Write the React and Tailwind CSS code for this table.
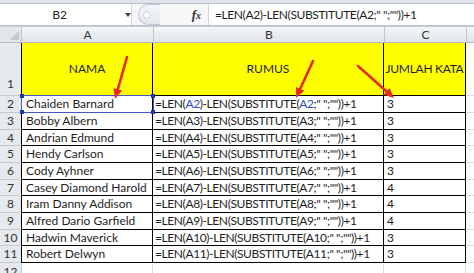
import React from "react";

const data = [
  ["Chaiden Barnard", 2, 3],
  ["Bobby Albern", 3, 3],
  ["Andrian Edmund", 4, 3],
  ["Hendy Carlson", 5, 3],
  ["Cody Ayhner", 6, 3],
  ["Casey Diamond Harold", 7, 4],
  ["Iram Danny Addison", 8, 4],
  ["Alfred Dario Garfield", 9, 4],
  ["Hadwin Maverick", 10, 3],
  ["Robert Delwyn", 11, 3],
];
const heights = ["h-[17px]", "h-[17px]", "h-[16px]", "h-[17px]", "h-[17px]", "h-[16px]", "h-[17px]", "h-[17px]", "h-[16px]", "h-[17px]"];

const font = { fontFamily: "Lato, 'Liberation Sans', sans-serif" };

function Formula({ n, hl }) {
  const cls = hl ? "text-[#3347c4]" : "";
  return (
    <>
      =LEN(<span className={cls}>A{n}</span>)-LEN(SUBSTITUTE(<span className={cls}>A{n}</span>;" ";""))+1
    </>
  );
}

function Arrow({ x1, y1, x2, y2 }) {
  const dx = x2 - x1, dy = y2 - y1;
  const len = Math.hypot(dx, dy);
  const ux = dx / len, uy = dy / len;
  const hl = 10, hw = 4.5;
  const bx = x2 - ux * hl, by = y2 - uy * hl;
  const px = -uy, py = ux;
  const pts = `${x2},${y2} ${bx + px * hw},${by + py * hw} ${bx - px * hw},${by - py * hw}`;
  return (
    <g>
      <line x1={x1} y1={y1} x2={bx + ux * 1} y2={by + uy * 1} stroke="#e52a1e" strokeWidth="2.6" strokeLinecap="round" />
      <polygon points={pts} fill="#e52a1e" />
    </g>
  );
}

export default function App() {
  return (
    <div className="relative w-[474px] h-[273px] overflow-hidden bg-white text-[12px] text-[#1e1e1e]" style={font}>
      {/* formula bar */}
      <div className="h-[27px] bg-[#dfe3e9] pt-[3px] border-b border-[#c9ced6]">
        <div className="flex h-[23px] border-y border-[#b7c0cc] bg-white">
          <div className="w-[131px] flex items-center relative">
            <span className="w-full text-center pr-[16px] pl-[4px] text-[12px] text-[#222]">B2</span>
            <span className="absolute left-[125px] top-[9px] w-0 h-0 border-l-[3px] border-r-[3px] border-t-[4px] border-l-transparent border-r-transparent border-t-[#444]"></span>
          </div>
          <div className="w-[78px] flex items-center bg-[#f6f7f9] border-l border-[#d3d8de] border-r border-[#b8c0ca]">
            <div className="ml-[6px] w-[22px] h-[21px] rounded-l-full border border-r-0 border-[#c3c9d1] bg-gradient-to-b from-[#f4f6f9] to-[#e3e7ec] flex items-center pl-[4px]">
              <div className="w-[8px] h-[8px] rounded-full border border-[#c9cfd6] bg-white"></div>
            </div>
            <span className="ml-auto mr-[7px] italic font-bold text-[13px] text-[#333]" style={{ fontFamily: "'Liberation Serif', serif" }}>
              f<span className="text-[10px]">x</span>
            </span>
          </div>
          <div className="flex-1 flex items-center pl-[6px] text-[12px] tracking-[-0.4px] whitespace-nowrap">
            =LEN(A2)-LEN(SUBSTITUTE(A2;" ";""))+1
          </div>
        </div>
      </div>

      {/* column headers */}
      <div className="flex h-[16px] bg-gradient-to-b from-[#f3f5f8] to-[#e1e5ea] border-b border-[#b5bcc6] text-[12px] text-[#333]">
        <div className="w-[22px] border-r border-[#bfc6cf] relative bg-[#e3e7ec]">
          <svg className="absolute right-[2px] bottom-[2px]" width="9" height="9" viewBox="0 0 9 9"><polygon points="9,0 9,9 0,9" fill="#c3c9d1" /></svg>
        </div>
        <div className="w-[132px] border-r border-[#bfc6cf] flex items-center justify-center">A</div>
        <div className="w-[231px] border-r border-[#bfc6cf] flex items-center justify-center">B</div>
        <div className="w-[82px] border-r border-[#bfc6cf] flex items-center justify-center">C</div>
        <div className="flex-1"></div>
      </div>

      {/* row 1 */}
      <div className="flex h-[53px]">
        <div className="w-[22px] bg-[#e6e9ed] border-r border-b border-[#c4cad2] flex items-end justify-center pb-[2px] text-[12px] text-[#333]">1</div>
        <div className="w-[132px] -ml-px border-l border-r border-b border-black bg-[#ffff00] flex items-center justify-center">NAMA</div>
        <div className="w-[231px] border-r border-b border-black bg-[#ffff00] flex items-center justify-center">RUMUS</div>
        <div className="w-[82px] border-r border-b border-black bg-[#ffff00] flex items-center justify-center whitespace-nowrap tracking-[-0.3px]">JUMLAH KATA</div>
        <div className="flex-1 border-b border-[#dadde1]"></div>
      </div>

      {data.map(([name, n, c], i) => (
        <div key={n} className={`flex ${heights[i]}`}>
          <div className="w-[22px] bg-[#e6e9ed] border-r border-b border-[#c4cad2] flex items-center justify-center text-[12px] text-[#333]">{n}</div>
          <div className="w-[132px] -ml-px border-l border-r border-b border-black flex items-center pl-[4px] whitespace-nowrap overflow-hidden">{name}</div>
          <div className="w-[231px] border-r border-b border-black flex items-center pl-[2px] whitespace-nowrap overflow-hidden tracking-[-0.4px]">
            <Formula n={n} hl={n === 2} />
          </div>
          <div className="w-[82px] border-r border-b border-black flex items-center pl-[3px]">{c}</div>
          <div className="flex-1 border-b border-[#dadde1]"></div>
        </div>
      ))}

      {/* row 12 */}
      <div className="flex h-[17px]">
        <div className="w-[22px] bg-[#e6e9ed] border-r border-[#c4cad2] flex items-center justify-center text-[12px] text-[#333]">12</div>
        <div className="w-[131px] border-r border-[#dadde1]"></div>
        <div className="w-[231px] border-r border-[#dadde1]"></div>
        <div className="w-[82px] border-r border-[#dadde1]"></div>
        <div className="flex-1"></div>
      </div>

      {/* A2 reference highlight */}
      <div className="absolute left-[21px] top-[95px] w-[133px] h-[18px] border border-[#4656c6]">
        <span className="absolute -left-[2px] -top-[2px] w-[4px] h-[4px] bg-[#1f33b5]"></span>
        <span className="absolute -right-[2px] -top-[2px] w-[4px] h-[4px] bg-[#1f33b5]"></span>
        <span className="absolute -left-[2px] -bottom-[2px] w-[4px] h-[4px] bg-[#1f33b5]"></span>
        <span className="absolute -right-[2px] -bottom-[2px] w-[4px] h-[4px] bg-[#1f33b5]"></span>
      </div>

      {/* arrows */}
      <svg className="absolute left-0 top-0 pointer-events-none" width="474" height="273">
        <Arrow x1={127} y1={57} x2={115} y2={99} />
        <Arrow x1={313} y1={61} x2={296} y2={98} />
        <Arrow x1={358} y1={66} x2={394} y2={98} />
      </svg>
    </div>
  );
}
